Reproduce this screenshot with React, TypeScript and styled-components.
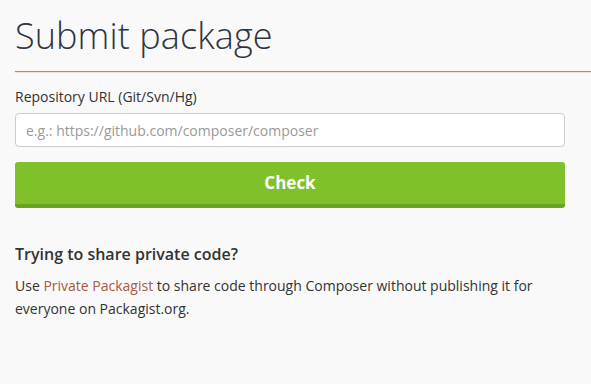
import React from "react";
import styled, { createGlobalStyle } from "styled-components";

const GlobalStyle = createGlobalStyle`
  html, body {
    margin: 0;
    padding: 0;
    background: #f9f9f9;
    font-family: "Open Sans", "Liberation Sans", sans-serif;
    color: #333;
  }
  * { box-sizing: border-box; }
`;

const Page = styled.main`
  padding: 0 0 0 15px;
`;

const Title = styled.h1`
  margin: 0;
  padding: 14px 0 0 0;
  font-size: 36px;
  font-weight: 300;
  line-height: 44px;
  color: #2f3443;
  letter-spacing: 0.1px;
`;

const Rule = styled.div`
  margin-top: 13px;
  height: 1px;
  background: #d0853c;
  box-shadow: 0 1px 0 #f7e4cf;
`;

const Form = styled.form`
  width: 550px;
  padding-top: 15px;
  display: flex;
  flex-direction: column;
`;

const Label = styled.label`
  font-size: 14px;
  line-height: 20px;
  color: #333;
  margin-bottom: 6px;
`;

const Input = styled.input`
  height: 34px;
  width: 100%;
  padding: 6px 10px;
  border: 1px solid #ccc;
  border-radius: 4px;
  background: #fff;
  font-family: inherit;
  font-size: 14px;
  color: #555;
  outline: none;

  &::placeholder {
    color: #999;
  }
`;

const Button = styled.button`
  margin-top: 15px;
  height: 46px;
  width: 100%;
  border: none;
  border-bottom: 4px solid #6aa322;
  border-radius: 3px;
  background: #80c02a;
  color: #fff;
  font-family: inherit;
  font-size: 17px;
  font-weight: 700;
  cursor: pointer;
  padding: 0;
  line-height: 42px;
`;

const Aside = styled.section`
  width: 550px;
  padding-top: 35px;
`;

const Subtitle = styled.h3`
  margin: 0;
  font-size: 16px;
  font-weight: 600;
  line-height: 22px;
  color: #333;
`;

const Text = styled.p`
  margin: 9px 0 0 0;
  font-size: 14px;
  line-height: 23px;
  color: #333;
`;

const Link = styled.a`
  color: #a85a3e;
  text-decoration: none;
`;

export default function App() {
  return (
    <>
      <GlobalStyle />
      <Page>
        <Title>Submit package</Title>
        <Rule />
        <Form onSubmit={(e) => e.preventDefault()}>
          <Label htmlFor="repo">Repository URL (Git/Svn/Hg)</Label>
          <Input id="repo" placeholder="e.g.: https://github.com/composer/composer" />
          <Button type="submit">Check</Button>
        </Form>
        <Aside>
          <Subtitle>Trying to share private code?</Subtitle>
          <Text>
            Use <Link href="#">Private Packagist</Link> to share code through Composer without
            publishing it for everyone on Packagist.org.
          </Text>
        </Aside>
      </Page>
    </>
  );
}
